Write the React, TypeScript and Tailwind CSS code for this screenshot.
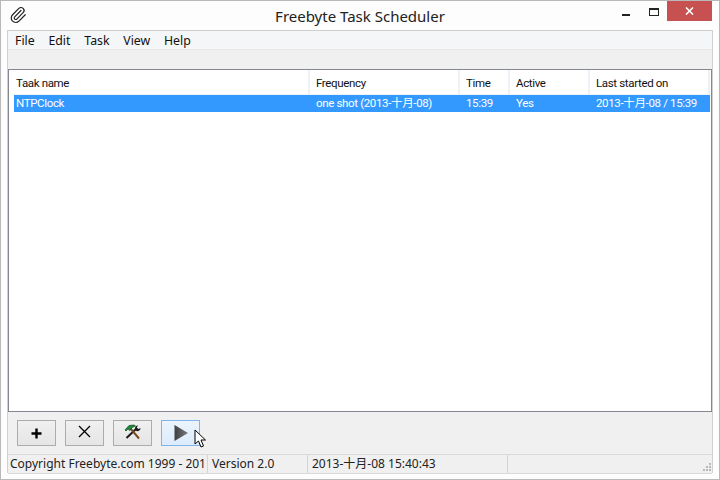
import { Paperclip } from 'lucide-react';

const columns = [
  { label: 'Taak name', width: 'w-[296px]', value: 'NTPClock', pad: 'pl-[2px]' },
  { label: 'Frequency', width: 'w-[150px]', value: 'one shot (2013-十月-08)', pad: 'pl-[6px]' },
  { label: 'Time', width: 'w-[50px]', value: '15:39', pad: 'pl-[6px]' },
  { label: 'Active', width: 'w-[80px]', value: 'Yes', pad: 'pl-[6px]' },
  { label: 'Last started on', width: 'w-[120px]', value: '2013-十月-08 / 15:39', pad: 'pl-[6px]' },
];

const menus = ['File', 'Edit', 'Task', 'View', 'Help'];

const ui = { fontFamily: '"Noto Sans", "Noto Sans CJK TC", sans-serif' };

function ToolButton({ active, children }: { active?: boolean; children: React.ReactNode }) {
  return (
    <button
      type="button"
      className={`flex h-[26px] w-[39px] items-center justify-center border ${
        active
          ? 'border-[#7eb4ea] bg-gradient-to-b from-[#ecf4fc] to-[#dcecfc]'
          : 'border-[#acacac] bg-gradient-to-b from-[#f0f0f0] to-[#e5e5e5]'
      }`}
    >
      {children}
    </button>
  );
}

function ToolsIcon() {
  return (
    <svg width="18" height="16" viewBox="0 0 18 16" className="-translate-y-[1px]">
      {/* wrench */}
      <path d="M2.5 14 L12 5" stroke="#1a1a1a" strokeWidth="2" />
      <path d="M11 5.5 a3.2 3.2 0 0 1 3-4 l-1.2 2 1.6 1.6 2.1-1.2 a3.2 3.2 0 0 1-4 3.2 z" fill="#1a1a1a" />
      {/* hammer */}
      <path d="M6 4 L15 14.5" stroke="#7a4a1c" strokeWidth="2" />
      <path d="M1 6 L5 1.5 L10 1 L11.5 2 L8 3.5 L6 6.5 L4 5 L2 7 Z" fill="#1f8a3a" stroke="#0c4a1c" strokeWidth="0.7" />
    </svg>
  );
}

export default function App() {
  return (
    <div
      className="flex h-[480px] w-[720px] flex-col overflow-hidden border border-[#b9b9b9] bg-[#fdfdfd] text-black"
      style={ui}
    >
      <div className="relative flex h-[29px] shrink-0 items-center justify-center">
        <Paperclip size={18} strokeWidth={1.6} className="absolute left-[8px] top-[5px] text-[#222]" />
        <span className="mt-[2px] text-[15px] leading-none text-[#222]">Freebyte Task Scheduler</span>
        <div className="absolute right-[7px] top-0 flex items-start">
          <span className="mr-[19px] mt-[13px] h-[2px] w-[8px] bg-[#222]" />
          <span className="mr-[8px] mt-[7px] h-[8px] w-[10px] border border-t-2 border-[#222]" />
          <span className="flex h-[20px] w-[45px] items-center justify-center bg-[#c75050]">
            <svg width="9" height="8" viewBox="0 0 9 8">
              <path d="M1 0.5 L8 7.5 M8 0.5 L1 7.5" stroke="#fff" strokeWidth="1.6" />
            </svg>
          </span>
        </div>
      </div>

      <div className="mx-[6px] mb-[6px] flex min-h-0 flex-1 flex-col border-x border-t border-[#cfcfcf] bg-[#f0f0f0]">
        <div className="flex h-[19px] shrink-0 items-center gap-[13.8px] border-b border-[#e8e8e8] bg-[#f5f6f7] pl-[7px] pt-[2px] text-[12.3px] leading-none text-[#111]">
          {menus.map((m) => (
            <span key={m}>{m}</span>
          ))}
        </div>
        <div className="h-[19px] shrink-0" />

        <div
          className="flex h-[343px] shrink-0 flex-col border border-[#828790] bg-white pl-[5px] text-[11.5px] tracking-[-0.35px]"
          style={{ fontFamily: 'Roboto, "Noto Sans CJK TC", sans-serif' }}
        >
          <div className="flex h-[25px] shrink-0 border-b border-[#eef2f6]">
            {columns.map((c) => (
              <div
                key={c.label}
                className={`${c.width} ${c.pad} flex shrink-0 items-center border-r-2 border-[#edf1f6] pt-[3px] text-[#111]`}
              >
                {c.label}
              </div>
            ))}
          </div>
          <div className="flex h-[17px] w-[696px] shrink-0 items-center bg-[#3399ff] text-white">
            {columns.map((c) => (
              <div key={c.label} className={`${c.width} ${c.pad} shrink-0 whitespace-nowrap leading-none`}>
                {c.value}
              </div>
            ))}
          </div>
        </div>

        <div className="flex h-[42px] shrink-0 items-center gap-[9px] pl-[9px]">
          <ToolButton>
            <svg width="11" height="11" viewBox="0 0 11 11">
              <path d="M5.5 0.5 V10.5 M0.5 5.5 H10.5" stroke="#000" strokeWidth="2.4" />
            </svg>
          </ToolButton>
          <ToolButton>
            <svg width="13" height="13" viewBox="0 0 13 13" className="-translate-y-[2px]">
              <path d="M1 1 L12 12 M12 1 L1 12" stroke="#000" strokeWidth="1.3" />
            </svg>
          </ToolButton>
          <ToolButton>
            <ToolsIcon />
          </ToolButton>
          <div className="relative">
            <ToolButton active>
              <svg width="14" height="16" viewBox="0 0 14 16">
                <defs>
                  <linearGradient id="play" x1="0" x2="1" y1="0" y2="0">
                    <stop offset="0" stopColor="#3f3f3f" />
                    <stop offset="1" stopColor="#7a7a7a" />
                  </linearGradient>
                </defs>
                <path d="M0.5 0 L14 8 L0.5 16 Z" fill="url(#play)" />
              </svg>
            </ToolButton>
            <svg width="13" height="20" viewBox="0 0 13 20" className="absolute left-[33px] top-[9px]">
              <path d="M1 1 V15 L4.5 12 L7 18 L9.5 17 L7 11 L11.5 11 Z" fill="#fff" stroke="#000" strokeWidth="1" />
            </svg>
          </div>
        </div>

        <div className="flex h-[20px] shrink-0 items-center border-y border-[#d9d9d9] text-[12px] leading-none text-[#222]">
          <div className="w-[200px] shrink-0 whitespace-nowrap border-r border-[#d4d4d4] py-[3px] pl-[2px]">
            Copyright Freebyte.com 1999 - 201
          </div>
          <div className="w-[100px] shrink-0 whitespace-nowrap border-r border-[#d4d4d4] py-[3px] pl-[4px]">
            Version 2.0
          </div>
          <div className="w-[200px] shrink-0 border-r border-[#d4d4d4] py-[3px] pl-[4px]">
            2013-十月-08 15:40:43
          </div>
          <div className="relative h-full flex-1">
            <svg width="10" height="10" viewBox="0 0 10 10" className="absolute bottom-[1px] right-0 text-[#b8b8b8]" fill="currentColor">
              <rect x="7" y="1" width="2" height="2" />
              <rect x="4" y="4" width="2" height="2" />
              <rect x="7" y="4" width="2" height="2" />
              <rect x="1" y="7" width="2" height="2" />
              <rect x="4" y="7" width="2" height="2" />
              <rect x="7" y="7" width="2" height="2" />
            </svg>
          </div>
        </div>
      </div>
    </div>
  );
}
